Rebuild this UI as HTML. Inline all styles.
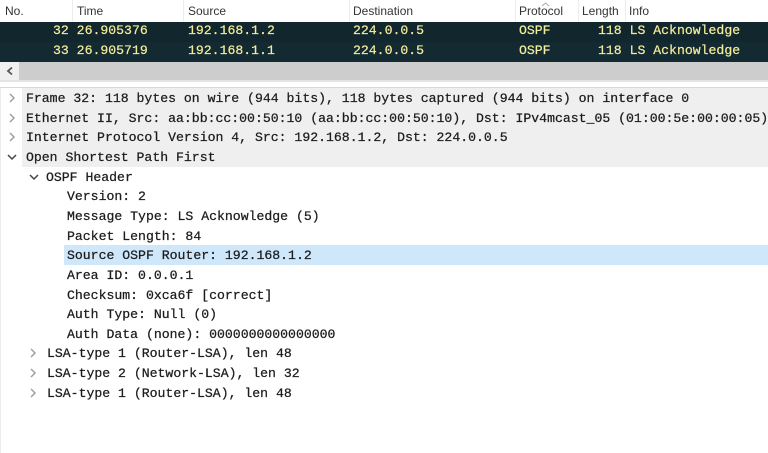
<!DOCTYPE html>
<html><head><meta charset="utf-8"><style>
html,body{margin:0;padding:0;background:#fff}
#p{position:relative;width:768px;height:453px;overflow:hidden;background:#fff}
.a{position:absolute}
.h{position:absolute;top:3px;font:12px/16px "Liberation Sans",sans-serif;color:#333;white-space:pre}
.s{position:absolute;top:0;width:1px;height:22px;background:#ececec}
.m{position:absolute;font:13.17px/20px "Liberation Mono",monospace;white-space:pre;color:#1c1c1c;-webkit-text-stroke:0.25px #1c1c1c}
.d{color:#f4ee9c;-webkit-text-stroke:0.2px #f4ee9c}
svg{position:absolute;left:0;top:0}
</style></head><body><div id="p">
<div class="a" style="left:0;top:0;width:768px;height:22px;background:#fff"></div>
<div class="s" style="left:72px"></div><div class="s" style="left:183px"></div><div class="s" style="left:349px"></div><div class="s" style="left:515px"></div><div class="s" style="left:578px"></div><div class="s" style="left:625px"></div>
<div class="h" style="left:5px">No.</div>
<div class="h" style="left:77px">Time</div>
<div class="h" style="left:188px">Source</div>
<div class="h" style="left:353px">Destination</div>
<div class="h" style="left:519px">Protocol</div>
<div class="h" style="left:582px">Length</div>
<div class="h" style="left:629px">Info</div>
<div class="a" style="left:0;top:22px;width:768px;height:20px;background:#12262d"></div>
<div class="a" style="left:0;top:42px;width:768px;height:20px;background:#142a32"></div>
<div class="m d" style="left:53px;top:21px">32 26.905376</div>
<div class="m d" style="left:188px;top:21px">192.168.1.2</div>
<div class="m d" style="left:353px;top:21px">224.0.0.5</div>
<div class="m d" style="left:519px;top:21px">OSPF</div>
<div class="m d" style="left:598px;top:21px">118 LS Acknowledge</div>
<div class="m d" style="left:53px;top:41px">33 26.905719</div>
<div class="m d" style="left:188px;top:41px">192.168.1.1</div>
<div class="m d" style="left:353px;top:41px">224.0.0.5</div>
<div class="m d" style="left:519px;top:41px">OSPF</div>
<div class="m d" style="left:598px;top:41px">118 LS Acknowledge</div>
<div class="a" style="left:0;top:62px;width:768px;height:18px;background:#cdcdcd"></div>
<div class="a" style="left:0;top:62px;width:19px;height:18px;background:#f0f0f0"></div>
<div class="a" style="left:0;top:80px;width:768px;height:2px;background:#e4e4e4"></div>
<div class="a" style="left:0;top:87px;width:768px;height:1px;background:#d8d8d8"></div>
<div class="a" style="left:0;top:88px;width:1px;height:365px;background:#ececec"></div>
<div class="a" style="left:22px;top:88px;width:746px;height:79px;background:#efefef"></div>
<div class="a" style="left:64px;top:245px;width:704px;height:20px;background:#cfe7fb"></div>
<div class="m" style="left:26px;top:89px">Frame 32: 118 bytes on wire (944 bits), 118 bytes captured (944 bits) on interface 0</div>
<div class="m" style="left:26px;top:109px">Ethernet II, Src: aa:bb:cc:00:50:10 (aa:bb:cc:00:50:10), Dst: IPv4mcast_05 (01:00:5e:00:00:05)</div>
<div class="m" style="left:26px;top:128px">Internet Protocol Version 4, Src: 192.168.1.2, Dst: 224.0.0.5</div>
<div class="m" style="left:26px;top:148px">Open Shortest Path First</div>
<div class="m" style="left:46px;top:168px">OSPF Header</div>
<div class="m" style="left:67px;top:187px">Version: 2</div>
<div class="m" style="left:67px;top:207px">Message Type: LS Acknowledge (5)</div>
<div class="m" style="left:67px;top:227px">Packet Length: 84</div>
<div class="m" style="left:67px;top:246px">Source OSPF Router: 192.168.1.2</div>
<div class="m" style="left:67px;top:266px">Area ID: 0.0.0.1</div>
<div class="m" style="left:67px;top:286px">Checksum: 0xca6f [correct]</div>
<div class="m" style="left:67px;top:305px">Auth Type: Null (0)</div>
<div class="m" style="left:67px;top:325px">Auth Data (none): 0000000000000000</div>
<div class="m" style="left:47px;top:344px">LSA-type 1 (Router-LSA), len 48</div>
<div class="m" style="left:47px;top:364px">LSA-type 2 (Network-LSA), len 32</div>
<div class="m" style="left:47px;top:384px">LSA-type 1 (Router-LSA), len 48</div>
<svg width="768" height="453" fill="none">
<path d="M12 67.5L8 71L12 74.5" stroke="#555" stroke-width="1.8"/>
<path d="M542 6L545.5 3L549 6" stroke="#aaa" stroke-width="1"/>
<g stroke="#a0a0a0" stroke-width="1.5">
<path d="M10 94L14 98L10 102"/><path d="M10 114L14 118L10 122"/><path d="M10 133L14 137L10 141"/>
<path d="M31 349L35 353L31 357"/><path d="M31 369L35 373L31 377"/><path d="M31 389L35 393L31 397"/>
</g>
<g stroke="#444" stroke-width="1.5">
<path d="M8 155L12 159L16 155"/><path d="M30 175L34 179L38 175"/>
</g>
</svg>
</div></body></html>
